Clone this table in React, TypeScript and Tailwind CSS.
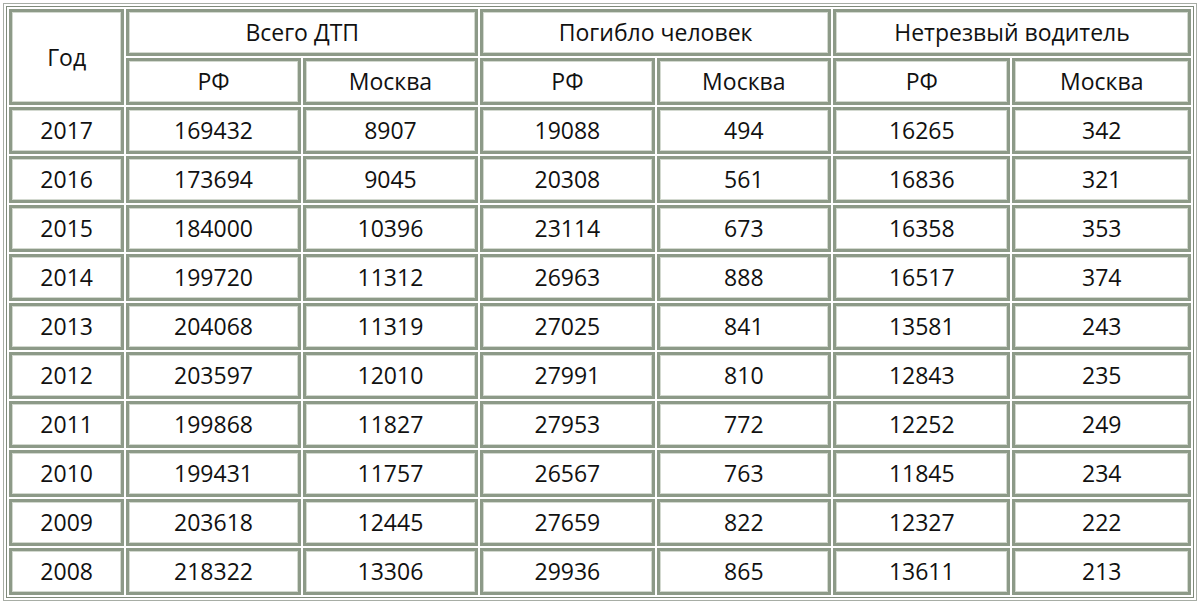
import { FC } from "react";

const rows: [number, number, number, number, number, number, number][] = [
  [2017, 169432, 8907, 19088, 494, 16265, 342],
  [2016, 173694, 9045, 20308, 561, 16836, 321],
  [2015, 184000, 10396, 23114, 673, 16358, 353],
  [2014, 199720, 11312, 26963, 888, 16517, 374],
  [2013, 204068, 11319, 27025, 841, 13581, 243],
  [2012, 203597, 12010, 27991, 810, 12843, 235],
  [2011, 199868, 11827, 27953, 772, 12252, 249],
  [2010, 199431, 11757, 26567, 763, 11845, 234],
  [2009, 203618, 12445, 27659, 822, 12327, 222],
  [2008, 218322, 13306, 29936, 865, 13611, 213],
];

const cell =
  "h-[47px] border-[3px] border-[#8d9a88] shadow-[inset_0_0_0_1px_#d3d9d0] text-center align-middle p-0";

const App: FC = () => {
  return (
    <div className="w-[1200px] h-[603px] bg-white pt-[3px] pl-[3px]">
      <div
        className="w-[1194px] border border-[#a7ada5] p-[2px]"
        style={{ fontFamily: '"Open Sans", "Noto Sans", sans-serif' }}
      >
        <table className="w-full table-fixed border-separate border-spacing-[2px] border border-[#7f8a7b] text-[23px] leading-none text-[#111]">
          <colgroup>
            <col className="w-[115px]" />
            <col className="w-[174px]" />
            <col className="w-[175px]" />
            <col className="w-[174px]" />
            <col className="w-[174px]" />
            <col className="w-[177px]" />
            <col className="w-[178px]" />
          </colgroup>
          <thead>
            <tr>
              <th rowSpan={2} className={`${cell} font-normal`}>
                Год
              </th>
              <th colSpan={2} className={`${cell} font-normal`}>
                Всего ДТП
              </th>
              <th colSpan={2} className={`${cell} font-normal`}>
                Погибло человек
              </th>
              <th colSpan={2} className={`${cell} font-normal`}>
                Нетрезвый водитель
              </th>
            </tr>
            <tr>
              {["РФ", "Москва", "РФ", "Москва", "РФ", "Москва"].map((h, i) => (
                <th key={i} className={`${cell} font-normal`}>
                  {h}
                </th>
              ))}
            </tr>
          </thead>
          <tbody>
            {rows.map((r) => (
              <tr key={r[0]}>
                {r.map((v, i) => (
                  <td key={i} className={cell}>
                    {v}
                  </td>
                ))}
              </tr>
            ))}
          </tbody>
        </table>
      </div>
    </div>
  );
};

export default App;
